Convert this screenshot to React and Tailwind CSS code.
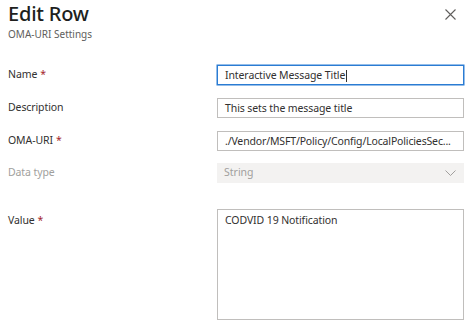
import React from 'react';

const font = { fontFamily: '"Noto Sans", "Open Sans", sans-serif' };

const Label = ({ children, required, muted }) => (
    <div className={`w-[209px] shrink-0 text-[10.5px] tracking-[-0.1px] ${muted ? 'text-[#a19f9d]' : 'text-[#323130]'}`}>
        {children}
        {required && <span className="text-[#a4262c] ml-[3px]">*</span>}
    </div>
);

const Field = ({ children, focused, className = '' }) => (
    <div
        className={`w-[247px] h-[20px] flex items-center px-[7px] border text-[10.5px] tracking-[-0.1px] text-[#323130] bg-white ${
            focused ? 'border-[#2b7cd3] shadow-[0_0_0_0.5px_#2b7cd3]' : 'border-[#c0bebc]'
        } ${className}`}
    >
        <span className="whitespace-nowrap leading-[16px]">{children}</span>
    </div>
);

const App = () => {
    return (
        <div className="w-[474px] h-[329px] bg-white overflow-hidden" style={font}>
            <div className="flex justify-between items-start pl-2 pr-[18px]">
                <div>
                    <h1 className="text-[20px] leading-[26px] font-medium text-[#201f1e] mt-[1px] tracking-[-0.2px]">
                        Edit Row
                    </h1>
                    <p className="text-[10px] leading-[12px] text-[#605e5c] mt-[1px]">OMA-URI Settings</p>
                </div>
                <svg width="11" height="11" viewBox="0 0 11 11" className="mt-[9px]">
                    <path d="M0.5 0.5 L10.5 10.5 M10.5 0.5 L0.5 10.5" stroke="#605e5c" strokeWidth="1.1" />
                </svg>
            </div>

            <div className="pl-2 mt-[25px] flex flex-col">
                <div className="flex items-center">
                    <Label required>Name</Label>
                    <Field focused>
                        Interactive Message Title
                        <span className="inline-block w-px h-[12px] bg-[#323130] align-middle ml-px" />
                    </Field>
                </div>
                <div className="flex items-center mt-[13px]">
                    <Label>Description</Label>
                    <Field>This sets the message title</Field>
                </div>
                <div className="flex items-center mt-[13px]">
                    <Label required>OMA-URI</Label>
                    <Field className="tracking-[-0.15px]">./Vendor/MSFT/Policy/Config/LocalPoliciesSec...</Field>
                </div>
                <div className="flex items-center mt-[12px]">
                    <Label muted>Data type</Label>
                    <div className="w-[247px] h-[20px] flex items-center justify-between px-[7px] bg-[#f3f2f1] text-[10.5px] text-[#a19f9d]">
                        <span>String</span>
                        <svg width="11" height="6" viewBox="0 0 11 6" className="mr-[1px]">
                            <path d="M0.5 0.5 L5.5 5.5 L10.5 0.5" fill="none" stroke="#a19f9d" strokeWidth="1" />
                        </svg>
                    </div>
                </div>
                <div className="flex items-start mt-[26px]">
                    <div className="pt-[4px]">
                        <Label required>Value</Label>
                    </div>
                    <div className="w-[247px] h-[111px] border border-[#c0bebc] px-[7px] pt-[3px] text-[10.5px] tracking-[-0.1px] text-[#323130]">
                        CODVID 19 Notification
                    </div>
                </div>
            </div>
        </div>
    );
};

export default App;
